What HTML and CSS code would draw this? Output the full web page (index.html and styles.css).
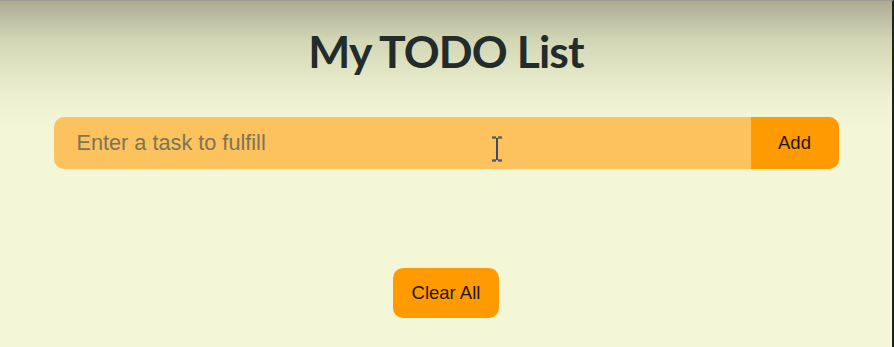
FILE: index.html
```html
<!DOCTYPE html>
<html>
<head>
<meta charset="utf-8">
<link rel="stylesheet" href="styles.css">
</head>
<body>
<div class="page">
  <h1 class="title">My TODO List</h1>
  <div class="entry">
    <input class="task-input" type="text" placeholder="Enter a task to fulfill">
    <button class="add-btn">Add</button>
  </div>
  <ul class="list"></ul>
  <button class="clear-btn">Clear All</button>
</div>
<svg class="cursor" width="14" height="28" viewBox="0 0 14 28">
  <path d="M2 2.5h4M8 2.5h4M7 3v22M2 25.5h4M8 25.5h4" stroke="#2b3a55" stroke-width="2" fill="none"/>
  <path d="M2 2.5h10M2 25.5h10M7 3v22" stroke="#7d9bd1" stroke-width="0.6" fill="none" opacity="0.6"/>
</svg>
</body>
</html>
```
FILE: styles.css
```css
html, body {
  margin: 0;
  padding: 0;
  height: 100%;
}
body {
  background: linear-gradient(to bottom, #aaaa94 0px, #d2d6b4 40px, #eef1d1 95px, #f3f6d7 130px, #f3f6d7 100%);
  border-top: 1px solid #9a9a92;
  border-right: 2px solid #1e2418;
  box-sizing: border-box;
  font-family: "Liberation Sans", Arial, sans-serif;
  overflow: hidden;
  position: relative;
}
.page {
  display: flex;
  flex-direction: column;
  align-items: center;
  padding-top: 22px;
}
.title {
  margin: 0;
  font-family: Lato, "Noto Sans", sans-serif;
  font-weight: 700;
  font-size: 44.5px;
  line-height: 56px;
  color: #232b2b;
  letter-spacing: -0.9px;
}
.entry {
  margin-top: 38px;
  width: 785px;
  height: 52px;
  display: flex;
  border-radius: 10px;
  overflow: hidden;
  background: #fcc25e;
}
.task-input {
  flex: 1;
  border: none;
  outline: none;
  background: transparent;
  padding: 0 0 0 23px;
  font-family: "Liberation Sans", Arial, sans-serif;
  font-size: 21.7px;
  color: #333;
}
.task-input::placeholder {
  color: #7f7454;
}
.add-btn {
  width: 88px;
  border: none;
  background: #ff9b00;
  font-family: "Liberation Sans", Arial, sans-serif;
  font-size: 18.5px;
  color: #1f1608;
  padding: 0;
}
.list {
  margin: 0;
  padding: 0;
  height: 99px;
  list-style: none;
}
.clear-btn {
  width: 106px;
  height: 50px;
  border: none;
  border-radius: 10px;
  background: #ff9b00;
  font-family: "Liberation Sans", Arial, sans-serif;
  font-size: 18.5px;
  color: #1f1608;
  padding: 0;
}
.cursor {
  position: absolute;
  left: 490px;
  top: 134px;
}
```
